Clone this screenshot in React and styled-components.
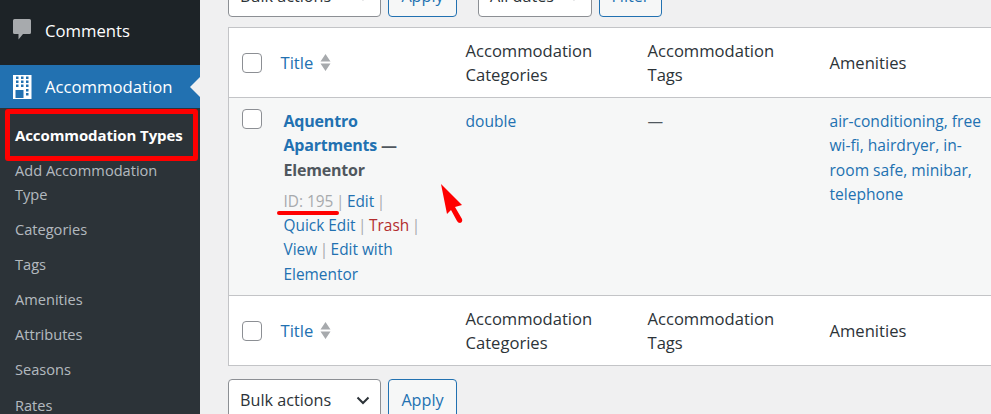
import React from "react";
import styled, { createGlobalStyle } from "styled-components";

const GlobalStyle = createGlobalStyle`
  html, body {
    margin: 0;
    padding: 0;
    height: 100%;
    overflow: hidden;
    background: #f0f0f1;
  }
  body {
    font-family: "Open Sans", "Noto Sans", sans-serif;
    font-size: 15px;
    color: #3c434a;
  }
`;

const Page = styled.div`
  position: relative;
  display: flex;
  width: 991px;
  height: 414px;
  overflow: hidden;
`;

const Sidebar = styled.nav`
  width: 200px;
  flex: none;
  background: #1d2327;
  padding-top: 13px;
  font-size: 16.7px;
`;

const MenuItem = styled.div`
  position: relative;
  display: flex;
  align-items: center;
  gap: 13px;
  height: ${(p) => (p.$active ? "43px" : "34px")};
  padding-left: 13px;
  margin-bottom: ${(p) => (p.$active ? "0" : "18px")};
  background: ${(p) => (p.$active ? "#2271b1" : "transparent")};
  color: #fff;
`;

const MenuIcon = styled.svg`
  width: 19px;
  height: 24px;
  flex: none;
`;

const Notch = styled.span`
  position: absolute;
  right: 0;
  top: 12px;
  border: 10px solid transparent;
  border-left-width: 0;
  border-right-color: #f0f0f1;
`;

const SubMenu = styled.div`
  background: #2c3338;
  min-height: 306px;
  padding-top: 10px;
`;

const SubLink = styled.div`
  position: relative;
  color: ${(p) => (p.$current ? "#fff" : "rgba(240, 246, 252, 0.7)")};
  font-weight: ${(p) => (p.$current ? 700 : 400)};
  font-size: 14.6px;
  line-height: 23.5px;
  padding: 5.85px 15px;
  ${(p) =>
    p.$current &&
    `
    font-size: 15px;
    letter-spacing: -0.1px;
    white-space: nowrap;
    &::after {
      content: "";
      position: absolute;
      left: 5px;
      right: 2px;
      top: -9.5px;
      height: 52px;
      box-sizing: border-box;
      border: 5px solid #f00;
      border-radius: 3px;
    }
  `}
`;

const Main = styled.main`
  flex: 1;
  min-width: 0;
  padding-left: 28px;
`;

const Toolbar = styled.div`
  display: flex;
  margin-top: ${(p) => (p.$top ? "-25px" : "13px")};
  margin-bottom: ${(p) => (p.$top ? "10px" : "0")};
  align-items: flex-start;
  gap: 7px;
`;

const Select = styled.div`
  display: flex;
  align-items: center;
  justify-content: space-between;
  box-sizing: border-box;
  width: ${(p) => p.$w}px;
  height: 42px;
  padding: 0 10px 0 11px;
  border: 1px solid #8c8f94;
  border-radius: 4px;
  background: #fff;
  color: #2c3338;
  font-size: 16.2px;
`;

const ToolButton = styled.div`
  display: flex;
  align-items: center;
  justify-content: center;
  box-sizing: border-box;
  width: ${(p) => p.$w}px;
  height: 42px;
  margin-right: ${(p) => p.$gap || 0}px;
  border: 1px solid #2271b1;
  border-radius: 4px;
  background: #f6f7f7;
  color: #2271b1;
  font-size: 16.2px;
`;

const Table = styled.table`
  width: 772px;
  table-layout: fixed;
  border-collapse: collapse;
  background: #fff;
  border: 1px solid #c3c4c7;
  font-size: 16.6px;
  line-height: 24px;
`;

const HeadCell = styled.th`
  font-weight: 400;
  text-align: left;
  vertical-align: middle;
  color: #2c3338;
  padding: 10.5px 11px;
  height: 48px;
  ${(p) => p.$top && "border-bottom: 1px solid #c3c4c7;"}
  ${(p) => p.$bottom && "border-top: 1px solid #c3c4c7;"}
`;

const BodyRow = styled.tr`
  background: #f6f7f7;
`;

const BodyCell = styled.td`
  vertical-align: top;
  padding: 11px 11px 8px;
  color: ${(p) => (p.$plain ? "#50575e" : "#2271b1")};
  font-size: 15.6px;
  line-height: 24.3px;
`;

const Box = styled.span`
  display: block;
  box-sizing: border-box;
  width: 20px;
  height: 20px;
  margin-left: 2px;
  border: 1px solid #8c8f94;
  border-radius: 4px;
  background: #fff;
`;

const SortLink = styled.span`
  display: inline-flex;
  align-items: center;
  gap: 7px;
  color: #2271b1;
`;

const SortIcon = styled.svg`
  width: 11px;
  height: 19px;
`;

const RowTitle = styled.div`
  font-size: 16px;
  font-weight: 700;
  color: #2271b1;
  padding-left: 3px;
  letter-spacing: -0.2px;
`;

const Dash = styled.span`
  color: #50575e;
`;

const RowActions = styled.div`
  position: relative;
  margin-top: 8px;
  padding-left: 3px;
  font-size: 15.4px;
  line-height: 24.3px;
`;

const Action = styled.span`
  color: ${(p) => p.$color || "#2271b1"};
  white-space: ${(p) => (p.$nowrap ? "nowrap" : "normal")};
`;

const Sep = styled.span`
  color: #a7aaad;
  margin: 0 -1.5px;
`;

// red annotations drawn on top of the screenshot
const Underline = styled.span`
  position: absolute;
  left: -4px;
  top: 21px;
  width: 62px;
  height: 4.5px;
  border-radius: 2px;
  background: #f00;
`;

const Arrow = styled.svg`
  position: absolute;
  left: 440px;
  top: 183px;
  width: 26px;
  height: 42px;
`;

const Chevron = () => (
  <svg width="14" height="9" viewBox="0 0 14 9">
    <path d="M1.5 1.5 L7 7 L12.5 1.5" fill="none" stroke="#2c3338" strokeWidth="2" />
  </svg>
);

const Sort = () => (
  <SortIcon viewBox="0 0 11 19">
    <path d="M5.5 1 L10.5 8.5 H0.5 Z M0.5 10.5 H10.5 L5.5 18 Z" fill="#a7aaad" />
  </SortIcon>
);

const Head = ({ top }) => (
  <tr>
    <HeadCell $top={top} $bottom={!top}>
      <Box />
    </HeadCell>
    <HeadCell $top={top} $bottom={!top}>
      <SortLink>
        Title
        <Sort />
      </SortLink>
    </HeadCell>
    <HeadCell $top={top} $bottom={!top}>
      Accommodation Categories
    </HeadCell>
    <HeadCell $top={top} $bottom={!top}>
      Accommodation Tags
    </HeadCell>
    <HeadCell $top={top} $bottom={!top}>
      Amenities
    </HeadCell>
  </tr>
);

export default function App() {
  return (
    <Page>
      <GlobalStyle />
      <Sidebar>
        <MenuItem>
          <MenuIcon viewBox="0 0 19 24">
            <path
              d="M1.5 1 H16.5 Q18 1 18 2.5 V14.5 Q18 16 16.5 16 H10 L5.5 21.5 V16 H1.5 Q0 16 0 14.5 V2.5 Q0 1 1.5 1 Z"
              fill="#a7aaad"
            />
          </MenuIcon>
          Comments
        </MenuItem>
        <MenuItem $active>
          <MenuIcon viewBox="0 0 19 24">
            <path
              fillRule="evenodd"
              d="M0 0 H18.5 V24 H0 Z M3 1.5 V4 H5.5 V1.5 Z M8 1.5 V4 H10.5 V1.5 Z M13 1.5 V4 H15.5 V1.5 Z M3 5.5 V8 H5.5 V5.5 Z M8 5.5 V8 H10.5 V5.5 Z M13 5.5 V8 H15.5 V5.5 Z M3 9.5 V12 H5.5 V9.5 Z M8 9.5 V12 H10.5 V9.5 Z M13 9.5 V12 H15.5 V9.5 Z M13 14 V16.5 H15.5 V14 Z M13 18 V20.5 H15.5 V18 Z M2.5 15 V23 H10.5 V15 Z"
              fill="#fff"
            />
          </MenuIcon>
          Accommodation
          <Notch />
        </MenuItem>
        <SubMenu>
          <SubLink $current>Accommodation Types</SubLink>
          <SubLink>Add Accommodation Type</SubLink>
          <SubLink>Categories</SubLink>
          <SubLink>Tags</SubLink>
          <SubLink>Amenities</SubLink>
          <SubLink>Attributes</SubLink>
          <SubLink>Seasons</SubLink>
          <SubLink>Rates</SubLink>
        </SubMenu>
      </Sidebar>
      <Main>
        <Toolbar $top>
          <Select $w={153}>
            Bulk actions
            <Chevron />
          </Select>
          <ToolButton $w={69} $gap={14}>
            Apply
          </ToolButton>
          <Select $w={114}>
            All dates
            <Chevron />
          </Select>
          <ToolButton $w={63}>Filter</ToolButton>
        </Toolbar>
        <Table>
          <colgroup>
            <col style={{ width: 41 }} />
            <col style={{ width: 185 }} />
            <col style={{ width: 182 }} />
            <col style={{ width: 182 }} />
            <col />
          </colgroup>
          <thead>
            <Head top />
          </thead>
          <tbody>
            <BodyRow>
              <BodyCell>
                <Box />
              </BodyCell>
              <BodyCell>
                <RowTitle>
                  Aquentro Apartments <Dash>— Elementor</Dash>
                </RowTitle>
                <RowActions>
                  <Action $color="#a7aaad">ID: 195</Action> <Sep>|</Sep> <Action>Edit</Action> <Sep>|</Sep>{" "}
                  <Action $nowrap>Quick Edit</Action> <Sep>|</Sep> <Action $color="#b32d2e">Trash</Action>{" "}
                  <Sep>|</Sep> <Action>View</Action> <Sep>|</Sep> <Action>Edit with Elementor</Action>
                  <Underline />
                </RowActions>
              </BodyCell>
              <BodyCell>double</BodyCell>
              <BodyCell $plain>—</BodyCell>
              <BodyCell>air-conditioning, free wi-fi, hairdryer, in-room safe, minibar, telephone</BodyCell>
            </BodyRow>
          </tbody>
          <tfoot>
            <Head />
          </tfoot>
        </Table>
        <Toolbar>
          <Select $w={153}>
            Bulk actions
            <Chevron />
          </Select>
          <ToolButton $w={69}>Apply</ToolButton>
        </Toolbar>
      </Main>
      <Arrow viewBox="0 0 26 42">
        <path d="M1 1 L22 22 L15 24 L22 36 Q23 39 20 40 Q18 40 17 38 L11 27 L7 31 Z" fill="#f00" />
      </Arrow>
    </Page>
  );
}
